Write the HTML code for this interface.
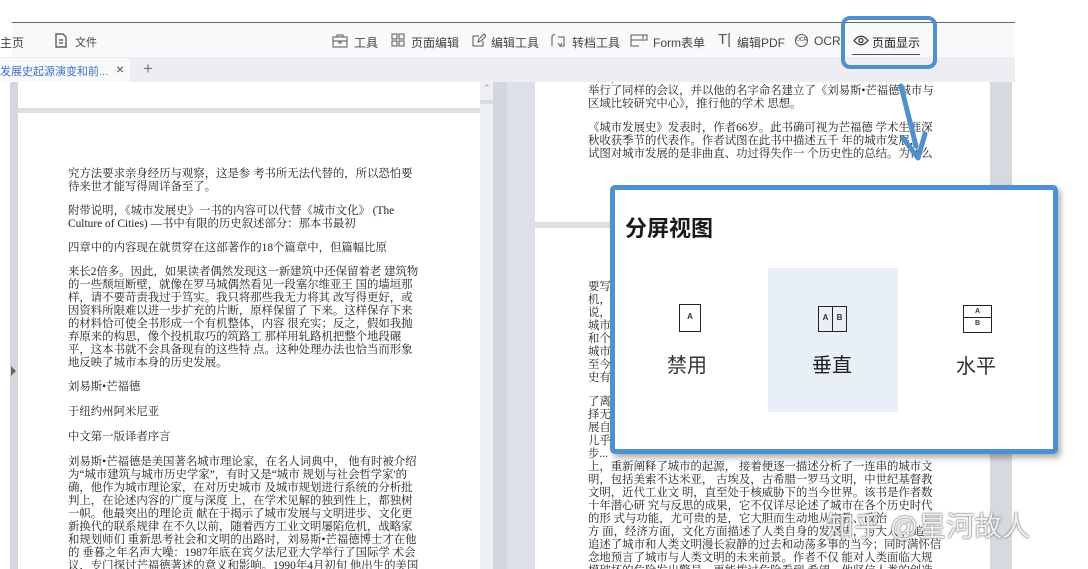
<!DOCTYPE html>
<html><head><meta charset="utf-8"><style>
*{margin:0;padding:0;box-sizing:border-box}
html,body{width:1088px;height:569px;overflow:hidden}
body{background:#fff;position:relative;font-family:"Liberation Sans","Noto Sans CJK SC",sans-serif;color:#333}
.a{position:absolute}
.serif{font-family:"Liberation Serif","Noto Serif CJK SC",serif;font-size:11.4px;color:#222;line-height:13px}
.serif p{margin-bottom:11px;white-space:nowrap}
.tb{font-size:12px;color:#444;top:34px;white-space:nowrap}
</style></head><body>
<div class="a" style="left:12px;top:22px;width:1003px;height:1px;background:#666"></div>
<div class="a" style="left:12px;top:23px;width:1003px;height:34px;background:#f8f9fb"></div>
<div class="a" style="left:0;top:57px;width:1015px;height:25px;background:#eceef2"></div>
<div class="a" style="left:0;top:58px;width:130px;height:24px;background:#f8f9fb;border-radius:0 4px 0 0"></div>
<div class="a tb" style="left:0">主页</div>
<svg class="a" style="left:54px;top:33px" width="14" height="15"><path d="M2 1h7l3 3v10H2z M5 7h4 M5 10h4" fill="none" stroke="#444" stroke-width="1.2"/></svg>
<div class="a tb" style="left:75px;font-size:11px">文件</div>
<svg class="a" style="left:332px;top:34px" width="16" height="14"><rect x="1" y="3" width="14" height="10" fill="none" stroke="#555"/><path d="M5 3V1h6v2 M1 7h14 M7 7v2h2V7" fill="none" stroke="#555"/></svg>
<div class="a tb" style="left:354px">工具</div>
<svg class="a" style="left:391px;top:33px" width="14" height="14"><g fill="none" stroke="#555"><rect x="1" y="1" width="5" height="5"/><rect x="8" y="1" width="5" height="5"/><rect x="1" y="8" width="5" height="5"/><rect x="8" y="8" width="5" height="5"/></g></svg>
<div class="a tb" style="left:411px">页面编辑</div>
<svg class="a" style="left:471px;top:33px" width="15" height="15"><path d="M12 8v5H2V3h6 M7 9l1-3 5-5 2 2-5 5z" fill="none" stroke="#555"/></svg>
<div class="a tb" style="left:491px">编辑工具</div>
<svg class="a" style="left:551px;top:33px" width="16" height="15"><path d="M1 13V3l3-2 M7 4h6v9H9 M11 10l-2 3-2-3" fill="none" stroke="#555"/></svg>
<div class="a tb" style="left:572px">转档工具</div>
<svg class="a" style="left:630px;top:33px" width="18" height="15"><path d="M1 2h16v5H1z M1 7v6h8 M13 2v4" fill="none" stroke="#555"/></svg>
<div class="a tb" style="left:653px">Form表单</div>
<div class="a tb" style="left:718px;font-size:15px;top:31px;color:#555">T|</div>
<div class="a tb" style="left:737px">编辑PDF</div>
<div class="a" style="left:795px;top:34px;width:13px;height:13px;border:1px solid #555;border-radius:50%;font-size:5px;line-height:11px;text-align:center">OCR</div>
<div class="a tb" style="left:814px">OCR</div>
<svg class="a" style="left:853px;top:34px" width="16" height="13"><path d="M1 6.5Q8-2 15 6.5Q8 15 1 6.5z" fill="none" stroke="#333" stroke-width="1.2"/><circle cx="8" cy="6.5" r="2" fill="none" stroke="#333" stroke-width="1.2"/></svg>
<div class="a tb" style="left:872px;color:#222">页面显示</div>
<div class="a" style="left:852px;top:54px;width:68px;height:1px;background:#555"></div>
<div class="a" style="left:841px;top:16px;width:96px;height:53px;border:4px solid #4f90cf;border-radius:9px"></div>
<div class="a" style="left:0;top:63px;font-size:11px;color:#3c74c6;white-space:nowrap">发展史起源演变和前...</div>
<div class="a" style="left:116px;top:61px;font-size:14px;color:#555">×</div>
<div class="a" style="left:143px;top:59px;font-size:17px;color:#777">+</div>
<div class="a" style="left:10px;top:82px;width:8px;height:487px;background:#d3d6dc"></div>
<div class="a" style="left:18px;top:82px;width:462px;height:26px;background:#fff"></div>
<div class="a" style="left:18px;top:108px;width:462px;height:5px;background:#dcdfe4"></div>
<div class="a" style="left:18px;top:113px;width:462px;height:456px;background:#fff"></div>
<div class="a" style="left:480px;top:82px;width:13px;height:487px;background:#eff0f3"></div>
<div class="a" style="left:483px;top:83px;font-size:9px;color:#999">⌃</div>
<div class="a" style="left:480px;top:100px;width:13px;height:4px;background:#d9dbdf"></div>
<div class="a" style="left:493px;top:82px;width:14px;height:487px;background:#d3d6dd"></div>
<div class="a" style="left:507px;top:82px;width:28px;height:487px;background:#dde0e6"></div>
<div class="a" style="left:11px;top:366px;width:0;height:0;border-left:5px solid #666;border-top:5px solid transparent;border-bottom:5px solid transparent"></div>
<div class="a serif" style="left:68px;top:168px">
<p>究方法要求亲身经历与观察，这是参 考书所无法代替的，所以恐怕要<br>待来世才能写得周详备至了。</p>
<p>附带说明，《城市发展史》一书的内容可以代替《城市文化》 (The<br>Culture of Cities) —书中有限的历史叙述部分：那本书最初</p>
<p>四章中的内容现在就贯穿在这部著作的18个篇章中，但篇幅比原</p>
<p>来长2倍多。因此，如果读者偶然发现这一新建筑中还保留着老 建筑物<br>的一些颓垣断壁，就像在罗马城偶然看见一段塞尔维亚王 国的墙垣那<br>样，请不要苛责我过于笃实。我只将那些我无力将其 改写得更好，或<br>因资料所限难以进一步扩充的片断，原样保留了 下来。这样保存下来<br>的材料恰可使全书形成一个有机整体，内容 很充实；反之，假如我抛<br>弃原来的构思，像个投机取巧的筑路工 那样用轧路机把整个地段碾<br>平，这本书就不会具备现有的这些特 点。这种处理办法也恰当而形象<br>地反映了城市本身的历史发展。</p>
<p style="margin-bottom:12px">刘易斯•芒福德</p>
<p style="margin-bottom:12px">于纽约州阿米尼亚</p>
<p style="margin-bottom:12px">中文第一版译者序言</p>
<p>刘易斯•芒福德是美国著名城市理论家，在名人词典中， 他有时被介绍<br>为“城市建筑与城市历史学家”，有时又是“城市 规划与社会哲学家'的<br>确，他作为城市理论家，在对历史城市 及城市规划进行系统的分析批<br>判上，在论述内容的广度与深度 上，在学术见解的独到性上，都独树<br>一帜。他最突出的理论贡 献在于揭示了城市发展与文明进步、文化更<br>新换代的联系规律 在不久以前，随着西方工业文明屡陷危机，战略家<br>和规划师们 重新思考社会和文明的出路时，刘易斯•芒福德博士才在他<br>的 垂暮之年名声大噪：1987年底在宾夕法尼亚大学举行了国际学 术会<br>议，专门探讨芒福德著述的意义和影响。1990年4月初旬 他出生的美国</p>
</div>
<div class="a" style="left:535px;top:82px;width:455px;height:140px;background:#fff"></div>
<div class="a" style="left:535px;top:222px;width:455px;height:6px;background:#dcdfe4"></div>
<div class="a" style="left:535px;top:228px;width:455px;height:341px;background:#fff"></div>
<div class="a" style="left:990px;top:82px;width:22px;height:487px;background:#d6d9df"></div>
<div class="a serif" style="left:588px;top:72px;clip-path:inset(10px 0 0 0)">
<p>城市，中国许多城市也相继仿效芒福德著作的翻译和研究工作<br>举行了同样的会议，并以他的名字命名建立了《刘易斯•芒福德城市与<br>区域比较研究中心》，推行他的学术 思想。</p>
<p>《城市发展史》发表时，作者66岁。此书确可视为芒福德 学术生涯深<br>秋收获季节的代表作。作者试图在此书中描述五千 年的城市发展，<br>试图对城市发展的是非曲直、功过得失作一 个历史性的总结。为什么</p>
</div>
<div class="a serif" style="left:588px;top:281px">
<p>要写<br>机，<br>说，<br>城市<br>和个<br>城市<br>至今<br>史有</p>
<p>了离<br>择无<br>展自<br>儿乎<br>步...<br>上，重新阐释了城市的起源， 接着便逐一描述分析了一连串的城市文<br>明，包括美索不达米亚， 古埃及，古希腊一罗马文明，中世纪基督教<br>文明，近代工业文 明，直至处于核威胁下的当今世界。该书是作者数<br>十年潜心研 究与反思的成果，它不仅详尽论述了城市在各个历史时代<br>的形 式与功能，尤可贵的是，它大胆而生动地从宗教、政治<br>方 面，经济方面，文化方面描述了人类自身的发展史，与大人 ，追<br>追述了城市和人类文明漫长寂静的过去和动荡多事的当今；同时满怀信<br>念地预言了城市与人类文明的未来前景。作者不仅 能对人类面临大规<br>模破坏的危险发出警号，更能拨过危险看到 希望，他坚信人类的创造</p>
</div>
<svg class="a" style="left:885px;top:80px" width="60" height="90"><path d="M16 6L31 66" stroke="#4f90cf" stroke-width="5" fill="none" stroke-linecap="round"/><path d="M18 58L33 78L40 54" stroke="#4f90cf" stroke-width="5" fill="none" stroke-linecap="round" stroke-linejoin="round"/></svg>
<div class="a" style="left:610px;top:185px;width:448px;height:269px;background:#fff;border:5px solid #4f90cf;border-radius:5px;box-shadow:3px 4px 6px rgba(0,0,0,.3)"></div>
<div class="a" style="left:625px;top:211px;font-size:22px;font-weight:bold;color:#1a1a1a">分屏视图</div>
<div class="a" style="left:768px;top:268px;width:130px;height:144px;background:#e8eff9"></div>
<div class="a" style="left:679px;top:304px;width:22px;height:28px;border:1.5px solid #222;font-size:8px;font-weight:bold;text-align:center;line-height:24px">A</div>
<div class="a" style="left:818px;top:306px;width:29px;height:26px;border:1.5px solid #222;font-size:8px;font-weight:bold;display:flex"><span style="flex:1;text-align:center;line-height:22px;border-right:1.5px solid #222">A</span><span style="flex:1;text-align:center;line-height:22px">B</span></div>
<div class="a" style="left:963px;top:305px;width:29px;height:28px;border:1.5px solid #222;font-size:7px;font-weight:bold;text-align:center"><div style="height:12px;line-height:12px;border-bottom:1.5px solid #222">A</div><div style="line-height:12px">B</div></div>
<div class="a" style="left:667px;top:349px;font-size:20px;color:#333">禁用</div>
<div class="a" style="left:812px;top:349px;font-size:20px;color:#222">垂直</div>
<div class="a" style="left:956px;top:350px;font-size:20px;color:#333">水平</div>
<div class="a" style="left:826px;top:505px;font-size:28px;color:rgba(255,255,255,.9);text-shadow:0 0 2px #666,0 0 1px #666;white-space:nowrap">知乎 @星河故人</div>
</body></html>
